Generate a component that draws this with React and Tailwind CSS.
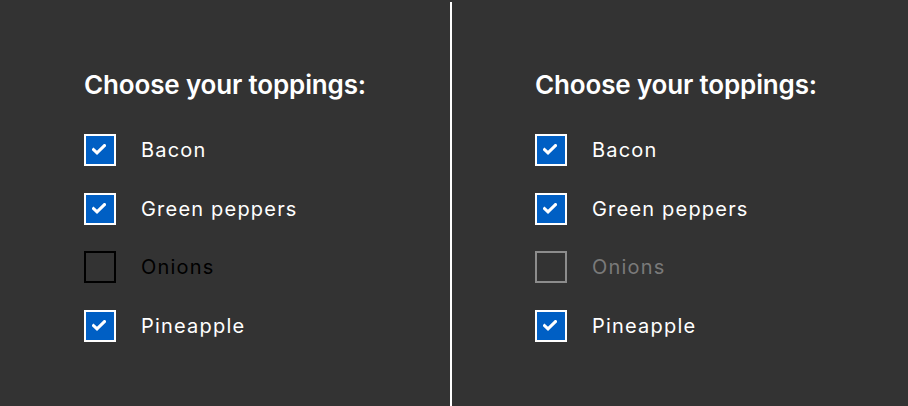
import React from "react";

const items = [
  { label: "Bacon", checked: true },
  { label: "Green peppers", checked: true },
  { label: "Onions", checked: false },
  { label: "Pineapple", checked: true },
];

function Check() {
  return (
    <svg width="14" height="11" viewBox="0 0 14 11" className="-ml-[2px] -mt-[1px]">
      <path d="M1.5 5.5 L5 8.8 L12.5 1.5" fill="none" stroke="white" strokeWidth="3" strokeLinecap="square" strokeLinejoin="miter" />
    </svg>
  );
}

function Panel({ disabled }) {
  return (
    <div className="flex flex-col pt-[67px]">
      <h2 className="text-[26px] leading-[36px] font-semibold tracking-[-0.15px] text-white">Choose your toppings:</h2>
      <div className="mt-[31px] flex flex-col gap-[26.67px]">
        {items.map((it) => {
          const dim = disabled && !it.checked;
          return (
            <div key={it.label} className="flex items-center h-8">
              {it.checked ? (
                <div className="w-8 h-8 border-2 border-white bg-[#005fc4] flex items-center justify-center">
                  <Check />
                </div>
              ) : dim ? (
                <div className="w-8 h-8 border-2 border-[#8c8c8c]" />
              ) : (
                <div className="w-8 h-8 border-2 border-black" />
              )}
              <span
                className={
                  "ml-[25px] text-[20px] leading-8 tracking-[1.2px] " +
                  (dim ? "text-[#7a7a7a]" : it.checked ? "text-white" : "text-black")
                }
              >
                {it.label}
              </span>
            </div>
          );
        })}
      </div>
    </div>
  );
}

export default function App() {
  return (
    <div
      className="w-[908px] h-[406px] bg-[#333333] flex overflow-hidden"
      style={{ fontFamily: "Inter, sans-serif" }}
    >
      <div className="w-[450px] pl-[84px]">
        <Panel />
      </div>
      <div className="w-[2px] bg-white mt-[2px]" />
      <div className="flex-1 pl-[83px]">
        <Panel disabled />
      </div>
    </div>
  );
}
